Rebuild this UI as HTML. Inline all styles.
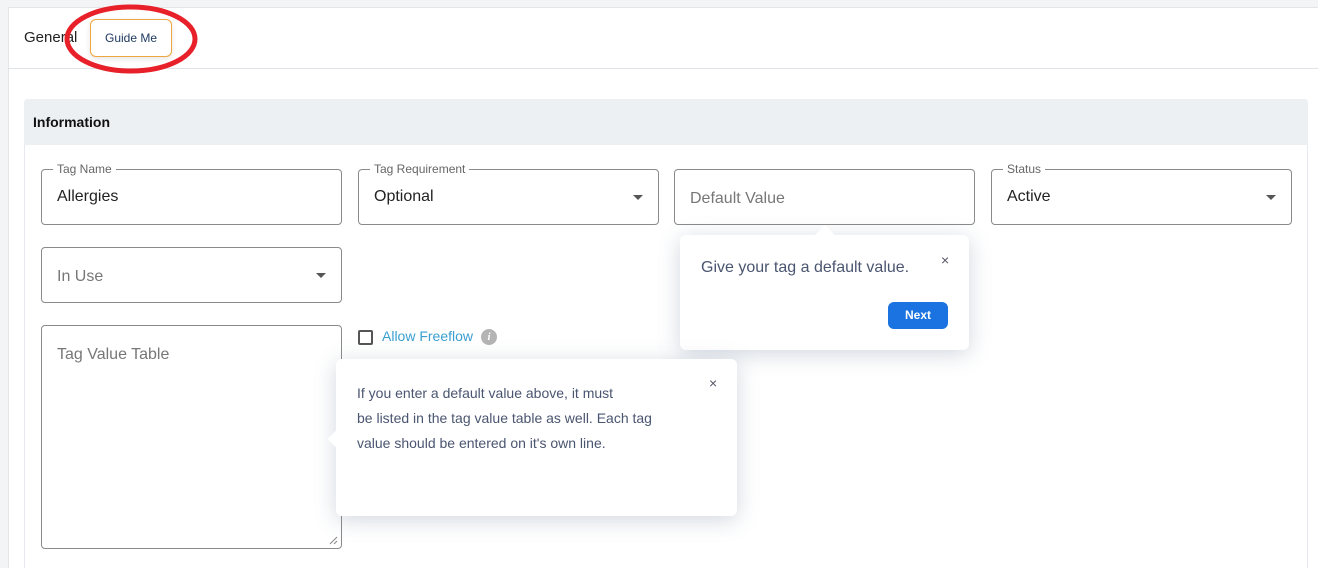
<!DOCTYPE html>
<html style="overflow:hidden;width:1318px;height:568px"><head><style>
*{box-sizing:border-box;margin:0;padding:0}
body{width:1318px;height:568px;overflow:hidden;background:#f3f4f6;font-family:"Liberation Sans",sans-serif;position:relative}
.abs{position:absolute}
.card{left:8px;top:7px;width:1310px;height:561px;background:#fff;border:1px solid #e3e5e8;border-right:none;border-bottom:none}
.hdr{left:8px;top:68px;width:1310px;height:1px;background:#dfe2e6}
.panel{left:24px;top:99px;width:1284px;height:469px;border:1px solid #e6e9ed;border-bottom:none;border-radius:4px 4px 0 0;background:#fff}
.ph{left:24px;top:99px;width:1284px;height:46px;background:#edf0f3;border-radius:4px 4px 0 0}
.field{border:1px solid #8a8a8a;border-radius:4px;background:#fff}
.lbl{position:absolute;top:-8px;left:11px;background:#fff;padding:0 4px;font-size:12px;color:#666}
.val{position:absolute;left:15px;top:18px;font-size:16px;color:#222}
.ph2{position:absolute;left:15px;top:20px;font-size:16px;color:#777}
.arr{position:absolute;right:15px;top:25px;width:0;height:0;border-left:5px solid transparent;border-right:5px solid transparent;border-top:5px solid #555}
.tip{background:#fff;border-radius:6px;box-shadow:0 4px 22px rgba(90,110,140,.28);color:#4a5570}
.x{position:absolute;font-size:14px;color:#556}
</style></head><body>
<div class="abs card"></div>
<div class="abs hdr"></div>
<div class="abs" style="left:24px;top:29px;font-size:15px;color:#222">General</div>
<div class="abs" style="left:90px;top:19px;width:82px;height:38px;border:1px solid #f0a640;border-radius:6px;background:#fff;box-shadow:0 2px 6px rgba(0,0,0,.1);font-size:12px;color:#1f3a60;text-align:center;line-height:36px">Guide Me</div>
<svg class="abs" style="left:62px;top:2px" width="138" height="74"><ellipse cx="69" cy="37" rx="64" ry="32" fill="none" stroke="#e8202a" stroke-width="5"/></svg>
<div class="abs panel"></div>
<div class="abs ph"></div>
<div class="abs" style="left:33px;top:114px;font-size:14px;font-weight:bold;color:#111">Information</div>

<div class="abs field" style="left:41px;top:169px;width:301px;height:56px"><span class="lbl">Tag Name</span><span class="val">Allergies</span></div>
<div class="abs field" style="left:358px;top:169px;width:301px;height:56px"><span class="lbl">Tag Requirement</span><span class="val">Optional</span><span class="arr"></span></div>
<div class="abs field" style="left:674px;top:169px;width:301px;height:56px"><span class="ph2">Default Value</span></div>
<div class="abs field" style="left:991px;top:169px;width:301px;height:56px"><span class="lbl">Status</span><span class="val">Active</span><span class="arr"></span></div>
<div class="abs field" style="left:41px;top:247px;width:301px;height:56px"><span class="ph2" style="top:20px">In Use</span><span class="arr"></span></div>
<div class="abs field" style="left:41px;top:325px;width:301px;height:224px"><span class="ph2" style="top:20px">Tag Value Table</span>
<svg style="position:absolute;right:3px;bottom:3px" width="10" height="10"><path d="M9 2L2 9M9 6L6 9" stroke="#888" stroke-width="1"/></svg></div>

<div class="abs" style="left:358px;top:330px;width:15px;height:15px;border:2px solid #555;border-radius:2px"></div>
<div class="abs" style="left:382px;top:328px;font-size:14px;color:#3a9fd0">Allow Freeflow</div>
<div class="abs" style="left:481px;top:329px;width:16px;height:16px;border-radius:50%;background:#b4b4b4;color:#fff;font-size:11px;font-weight:bold;text-align:center;line-height:16px;font-style:italic;font-family:'Liberation Serif',serif">i</div>

<div class="abs tip" style="left:680px;top:235px;width:289px;height:115px">
<div style="position:absolute;left:138px;top:-7px;width:14px;height:14px;background:#fff;transform:rotate(45deg)"></div>
<div style="position:absolute;left:21px;top:24px;font-size:16px">Give your tag a default value.</div>
<div class="x" style="left:261px;top:17px">×</div>
<div style="position:absolute;left:208px;top:67px;width:60px;height:27px;background:#1a73e0;border-radius:6px;color:#fff;font-size:12px;font-weight:bold;text-align:center;line-height:27px">Next</div>
</div>

<div class="abs tip" style="left:336px;top:359px;width:401px;height:157px">
<div style="position:absolute;left:-6px;top:74px;width:12px;height:12px;background:#fff;transform:rotate(45deg)"></div>
<div style="position:absolute;left:21px;top:22px;font-size:14px;line-height:25px">If you enter a default value above, it must<br>be listed in the tag value table as well. Each tag<br>value should be entered on it's own line.</div>
<div class="x" style="left:373px;top:16px">×</div>
</div>
</body></html>
